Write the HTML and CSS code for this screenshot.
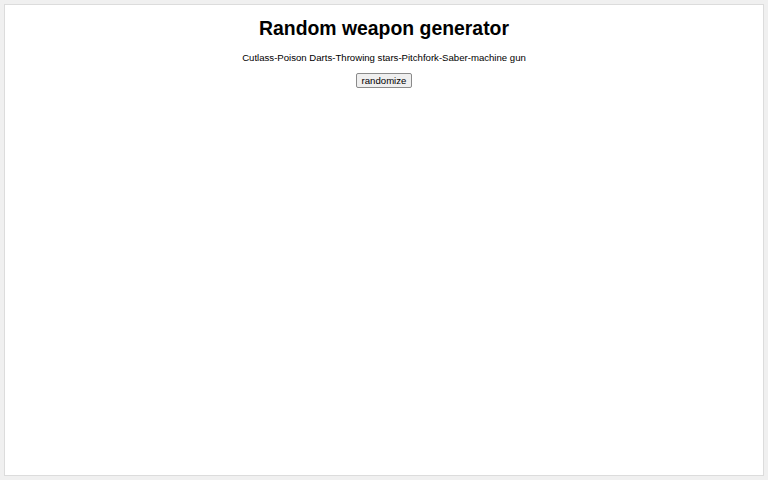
FILE: index.html
```html
<!DOCTYPE html>
<html lang="en">
<head>
    <meta charset="UTF-8">
    <meta name="viewport" content="width=device-width, initial-scale=1.0">
    <title>Random weapon generator</title>
    <link rel="stylesheet" href="styles.css">
</head>
<body>
    <div class="page">
        <h1 class="title">Random weapon generator</h1>
        <p class="weapons" id="weapons">Cutlass-Poison Darts-Throwing stars-Pitchfork-Saber-machine gun</p>
        <button class="randomize-btn" id="randomize">randomize</button>
    </div>
</body>
</html>
```

FILE: styles.css
```css
* {
    margin: 0;
    padding: 0;
    box-sizing: border-box;
}

body {
    font-family: 'Liberation Sans', Arial, sans-serif;
    background-color: #f0f0f0;
    padding: 4px;
    height: 100vh;
    overflow: hidden;
}

.page {
    background-color: #ffffff;
    border: 1px solid #dcdcdc;
    height: 472px;
    display: flex;
    flex-direction: column;
    align-items: center;
    padding-top: 12px;
}

.title {
    font-size: 19.4px;
    font-weight: bold;
    color: #000;
    line-height: 23px;
}

.weapons {
    font-size: 9.6px;
    color: #000;
    margin-top: 12px;
    line-height: 12px;
}

.randomize-btn {
    font-family: 'Liberation Sans', Arial, sans-serif;
    font-size: 9.6px;
    margin-top: 9px;
    padding: 1px 4.5px;
    background-color: #efefef;
    border: 1px solid #8a8a8a;
    border-radius: 2px;
    color: #000;
}
```
